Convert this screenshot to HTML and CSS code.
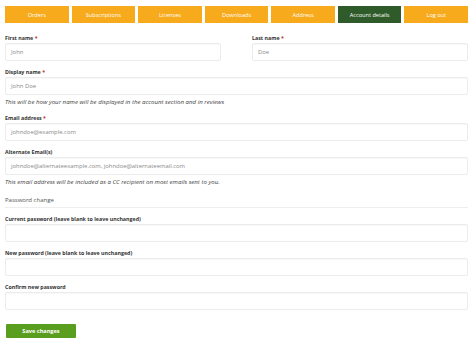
FILE: index.html
```html
<!DOCTYPE html>
<html lang="en">
<head>
<meta charset="utf-8">
<title>Account details</title>
<link rel="stylesheet" href="styles.css">
</head>
<body>
<div class="wrap">
  <nav class="tabs">
    <a class="tab">Orders</a>
    <a class="tab">Subscriptions</a>
    <a class="tab">Licenses</a>
    <a class="tab">Downloads</a>
    <a class="tab">Address</a>
    <a class="tab active">Account details</a>
    <a class="tab">Log out</a>
  </nav>
  <form class="form">
    <div class="pair">
      <div class="row">
        <label class="label">First name <span class="req">*</span></label>
        <div class="input">John</div>
      </div>
      <div class="row">
        <label class="label">Last name <span class="req">*</span></label>
        <div class="input">Doe</div>
      </div>
    </div>
    <div class="row">
      <label class="label">Display name <span class="req">*</span></label>
      <div class="input">John Doe</div>
      <p class="desc">This will be how your name will be displayed in the account section and in reviews</p>
    </div>
    <div class="row">
      <label class="label">Email address <span class="req">*</span></label>
      <div class="input">johndoe@example.com</div>
    </div>
    <div class="row">
      <label class="label">Alternate Email(s)</label>
      <div class="input">johndoe@alternateexample.com, johndoe@alternateemail.com</div>
      <p class="desc">This email address will be included as a CC recipient on most emails sent to you.</p>
    </div>
    <div class="legend">Password change</div>
    <div class="row">
      <label class="label">Current password (leave blank to leave unchanged)</label>
      <div class="input"></div>
    </div>
    <div class="row">
      <label class="label">New password (leave blank to leave unchanged)</label>
      <div class="input"></div>
    </div>
    <div class="row">
      <label class="label">Confirm new password</label>
      <div class="input"></div>
    </div>
    <button class="save" type="button">Save changes</button>
  </form>
</div>
</body>
</html>
```
FILE: styles.css
```css
* { box-sizing: border-box; }
body {
  margin: 0;
  background: #fff;
  font-family: "Open Sans", "Noto Sans", sans-serif;
  color: #333;
}
.wrap {
  padding: 6px 6px 0 5px;
}
.tabs {
  display: flex;
  gap: 3px;
}
.tab {
  flex: 1;
  height: 17px;
  display: flex;
  align-items: center;
  justify-content: center;
  background: #f6aa1c;
  color: #fff;
  font-size: 5.6px;
  text-decoration: none;
}
.tab.active {
  background: #2f5b2a;
}
.form {
  margin-top: 10px;
}
.pair {
  display: flex;
  justify-content: space-between;
}
.pair .row {
  width: 216px;
}
.row {
  margin-bottom: 6px;
}
.label {
  display: block;
  height: 10px;
  line-height: 10px;
  font-size: 5.3px;
  font-weight: 700;
  color: #333;
}
.req {
  color: #c0392b;
}
.input {
  height: 18px;
  border: 1px solid #ececec;
  border-radius: 2px;
  box-shadow: inset 0 1px 1px rgba(0,0,0,0.03);
  padding-left: 5px;
  display: flex;
  align-items: center;
  font-size: 5.9px;
  color: #8a8a8a;
  background: #fff;
}
.desc {
  margin: 2px 0 0;
  line-height: 10px;
  font-size: 6.1px;
  font-style: italic;
  color: #444;
}
.legend {
  margin-top: 8px;
  line-height: 10px;
  padding-bottom: 2px;
  border-bottom: 1px solid #eee;
  font-size: 6px;
  color: #555;
  margin-bottom: 6px;
}
.save {
  margin-top: 6px;
  width: 70px;
  height: 14px;
  border: 0;
  border-radius: 1px;
  background: #5a9e20;
  color: #fff;
  font-family: "Open Sans", "Noto Sans", sans-serif;
  font-size: 5.6px;
  font-weight: 700;
  padding: 0;
  margin-left: 1px;
}
```
